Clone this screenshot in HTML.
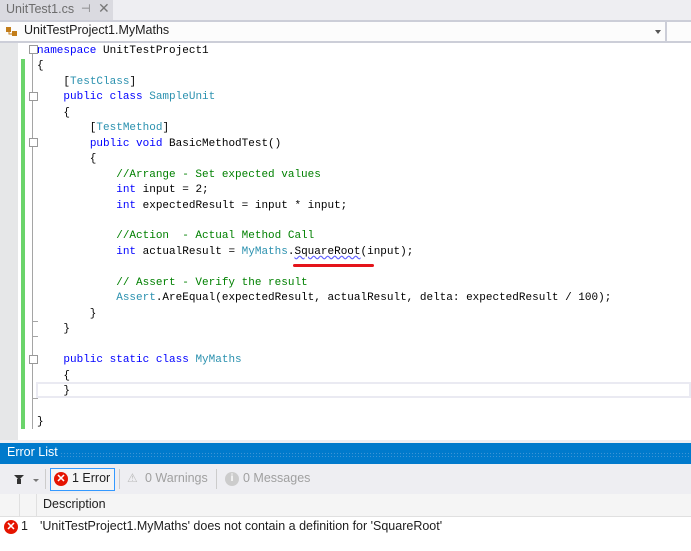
<!DOCTYPE html>
<html><head><style>
*{margin:0;padding:0;box-sizing:border-box}
body{width:691px;height:551px;background:#eeeef2;font-family:"Segoe UI","Liberation Sans",sans-serif;position:relative;overflow:hidden;font-size:12px}
.abs{position:absolute}
.code{font-family:"Liberation Mono",monospace;font-size:11px;white-space:pre;color:#000}
.k{color:#0000ff}.t{color:#2b91af}.c{color:#008000}
</style></head><body>
<div class="abs" style="left:0;top:0;width:113px;height:20px;background:#dadae0"></div>
<div class="abs" style="left:6px;top:2px;color:#6d6d6d;font-size:12.5px">UnitTest1.cs</div>
<div class="abs" style="left:81px;top:2px;color:#777;font-size:11px">⊣</div>
<div class="abs" style="left:98px;top:0px;color:#777;font-size:14px">✕</div>
<div class="abs" style="left:0;top:20px;width:691px;height:23px;background:#fcfcfc;border-top:2px solid #ccced8;border-bottom:2px solid #ccced8"></div>
<div class="abs" style="left:665px;top:20px;width:2px;height:23px;background:#ccced8"></div>
<div class="abs" style="left:655px;top:30px;width:0;height:0;border-left:3px solid transparent;border-right:3px solid transparent;border-top:4px solid #555"></div>
<div class="abs" style="left:6px;top:25px;width:12px;height:12px"><svg width="12" height="12"><rect x="0" y="2" width="5" height="5" fill="#c27d1a"/><rect x="6" y="6" width="5" height="5" fill="#c27d1a"/><path d="M3 7V9H6" stroke="#c27d1a" fill="none"/></svg></div>
<div class="abs" style="left:24px;top:23px;color:#1e1e1e;font-size:12.5px">UnitTestProject1.MyMaths</div>
<div class="abs" style="left:0;top:43px;width:691px;height:397px;background:#fff"></div>
<div class="abs" style="left:0;top:43px;width:18px;height:397px;background:#e6e7e8"></div>
<div class="abs" style="left:21px;top:59px;width:4px;height:370px;background:#6bd46b"></div>
<div class="abs" style="left:32px;top:54px;width:1px;height:375px;background:#a5a5a5"></div>
<div class="abs" style="left:29px;top:45px;width:9px;height:9px;border:1px solid #999;background:#fff"></div>
<div class="abs" style="left:29px;top:92px;width:9px;height:9px;border:1px solid #999;background:#fff"></div>
<div class="abs" style="left:29px;top:138px;width:9px;height:9px;border:1px solid #999;background:#fff"></div>
<div class="abs" style="left:29px;top:355px;width:9px;height:9px;border:1px solid #999;background:#fff"></div>
<div class="abs" style="left:33px;top:321px;width:5px;height:1px;background:#a5a5a5"></div>
<div class="abs" style="left:33px;top:336px;width:5px;height:1px;background:#a5a5a5"></div>
<div class="abs" style="left:33px;top:398px;width:5px;height:1px;background:#a5a5a5"></div>
<div class="abs" style="left:36px;top:382px;width:655px;height:16px;border:2px solid #eaeaf2"></div>
<div class="abs code" style="left:37px;top:44px;line-height:15.45px"><span class="k">namespace</span> UnitTestProject1
{
    [<span class="t">TestClass</span>]
    <span class="k">public class</span> <span class="t">SampleUnit</span>
    {
        [<span class="t">TestMethod</span>]
        <span class="k">public void</span> BasicMethodTest()
        {
            <span class="c">//Arrange - Set expected values</span>
            <span class="k">int</span> input = 2;
            <span class="k">int</span> expectedResult = input * input;

            <span class="c">//Action  - Actual Method Call</span>
            <span class="k">int</span> actualResult = <span class="t">MyMaths</span>.<span style="text-decoration:underline wavy #6060ff">SquareRoot</span>(input);

            <span class="c">// Assert - Verify the result</span>
            <span class="t">Assert</span>.AreEqual(expectedResult, actualResult, delta: expectedResult / 100);
        }
    }

    <span class="k">public static class</span> <span class="t">MyMaths</span>
    {
    }

}</div>
<div class="abs" style="left:293px;top:264px;width:81px;height:3px;background:#e4141a;border-radius:2px"></div>
<div class="abs" style="left:0;top:443px;width:691px;height:21px;background:#007acc"></div>
<div class="abs" style="left:7px;top:445px;color:#fff;font-size:12.5px">Error List</div>
<div class="abs" style="left:60px;top:452px;width:631px;height:5px;background-image:radial-gradient(#3d95d6 0.6px,transparent 0.8px);background-size:3px 3px"></div>
<div class="abs" style="left:0;top:464px;width:691px;height:30px;background:#eeeef2"></div>
<div class="abs" style="left:14px;top:475px;width:0;height:0;border-left:5px solid transparent;border-right:5px solid transparent;border-top:5px solid #333"></div>
<div class="abs" style="left:17px;top:479px;width:4px;height:5px;background:#333"></div>
<div class="abs" style="left:33px;top:479px;width:0;height:0;border-left:3px solid transparent;border-right:3px solid transparent;border-top:3px solid #777"></div>
<div class="abs" style="left:45px;top:469px;width:1px;height:20px;background:#ccc"></div>
<div class="abs" style="left:50px;top:468px;width:65px;height:23px;border:1px solid #3399ff;background:#f5f5f5"></div>
<div class="abs" style="left:54px;top:472px;width:14px;height:14px;border-radius:50%;background:#e51400;color:#fff;font-size:11px;line-height:14px;text-align:center;font-weight:bold">✕</div>
<div class="abs" style="left:72px;top:471px;color:#1e1e1e;font-size:12.5px">1 Error</div>
<div class="abs" style="left:119px;top:469px;width:1px;height:20px;background:#ccc"></div>
<div class="abs" style="left:127px;top:471px;color:#bbb;font-size:12px">⚠</div>
<div class="abs" style="left:145px;top:471px;color:#a0a0a0;font-size:12.5px">0 Warnings</div>
<div class="abs" style="left:216px;top:469px;width:1px;height:20px;background:#ccc"></div>
<div class="abs" style="left:225px;top:472px;width:14px;height:14px;border-radius:50%;background:#ccc;color:#fff;font-size:10px;line-height:14px;text-align:center;font-weight:bold">i</div>
<div class="abs" style="left:243px;top:471px;color:#a0a0a0;font-size:12.5px">0 Messages</div>
<div class="abs" style="left:0;top:494px;width:691px;height:23px;background:#f5f5f5;border-bottom:1px solid #e0e0e0"></div>
<div class="abs" style="left:19px;top:494px;width:1px;height:23px;background:#e0e0e0"></div>
<div class="abs" style="left:36px;top:494px;width:1px;height:23px;background:#e0e0e0"></div>
<div class="abs" style="left:43px;top:497px;color:#1e1e1e;font-size:12.5px">Description</div>
<div class="abs" style="left:0;top:517px;width:691px;height:34px;background:#fff"></div>
<div class="abs" style="left:4px;top:520px;width:14px;height:14px;border-radius:50%;background:#e51400;color:#fff;font-size:11px;line-height:14px;text-align:center;font-weight:bold">✕</div>
<div class="abs" style="left:21px;top:519px;color:#1e1e1e;font-size:12.5px">1</div>
<div class="abs" style="left:40px;top:519px;color:#1e1e1e;font-size:12.5px">'UnitTestProject1.MyMaths' does not contain a definition for 'SquareRoot'</div>
</body></html>
